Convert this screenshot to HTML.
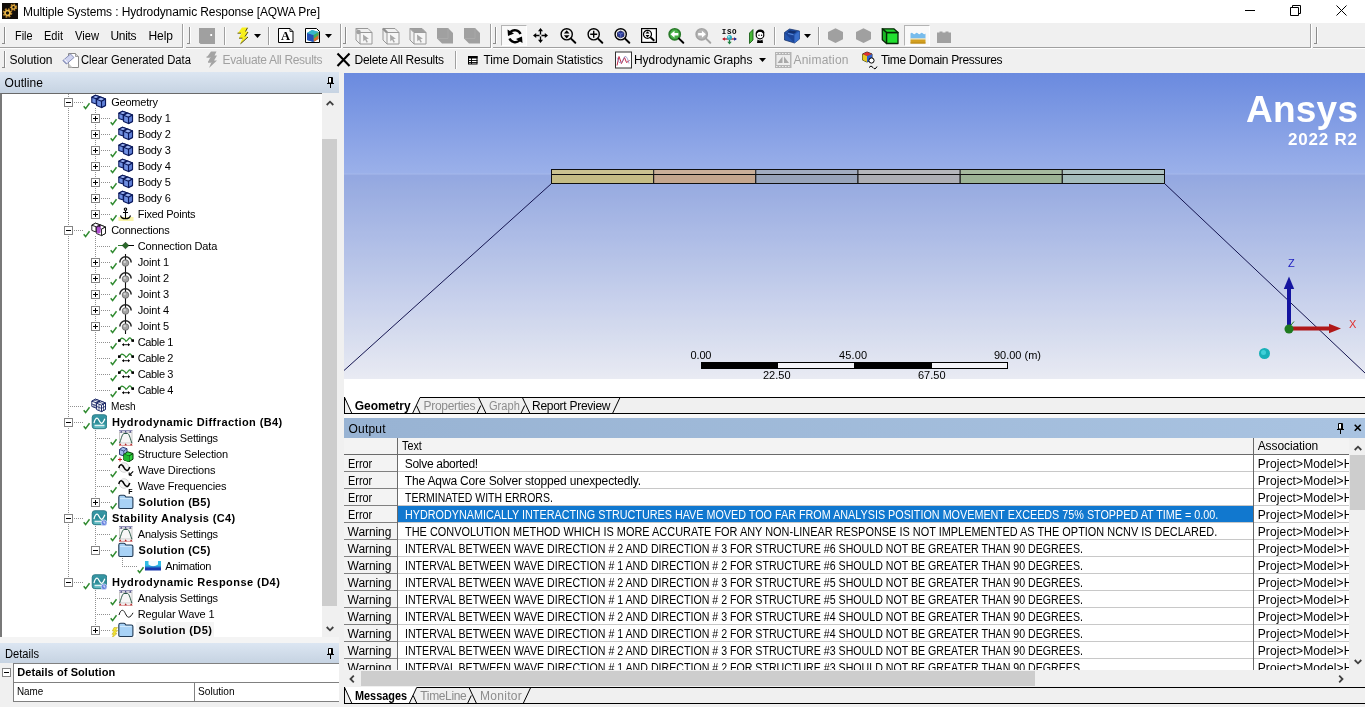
<!DOCTYPE html><html><head><meta charset="utf-8"><title>Multiple Systems : Hydrodynamic Response [AQWA Pre]</title><style>
html,body{margin:0;padding:0;}
body{width:1365px;height:707px;position:relative;overflow:hidden;background:#f0f0f0;will-change:transform;font-family:"Liberation Sans",sans-serif;}
div,span.t,svg{position:absolute;}
span.t{white-space:pre;line-height:1;}
</style></head><body>
<div style="left:0px;top:0px;width:1365px;height:23px;background:#fff;"></div>
<svg style="left:2px;top:3px" width="16" height="16" viewBox="0 0 16 16"><rect width="16" height="16" fill="#120e0a"/><g fill="none"><circle cx="5.500" cy="10" r="3.300" stroke="#b8822a" stroke-width="3" stroke-dasharray="1.500 1.100"/><circle cx="5.500" cy="10" r="2.500" stroke="#e8b84a" stroke-width="1.700"/><circle cx="11.500" cy="4.300" r="2.500" stroke="#b8822a" stroke-width="2.400" stroke-dasharray="1.300 1"/><circle cx="11.500" cy="4.300" r="1.900" stroke="#e0ac40" stroke-width="1.300"/></g></svg>
<span class="t" style="left:23px;top:5.84px;font-size:12px;letter-spacing:-0.107px;">Multiple Systems : Hydrodynamic Response [AQWA Pre]</span>
<svg style="left:1240px;top:0" width="125" height="22" viewBox="1240 0 125 22" fill="none" stroke="#000" stroke-width="1"><path d="M1245 10.500h10"/><path d="M1290.500 7.500h8v8h-8z M1292.500 7.500v-2h8v8h-2"/><path d="M1336.500 5.500l10 10M1346.500 5.500l-10 10"/></svg>
<div style="left:0px;top:47px;width:183px;height:1px;background:#a0a0a0;"></div>
<div style="left:0px;top:48px;width:184px;height:1px;background:#fff;"></div>
<div style="left:182px;top:24px;width:1px;height:24px;background:#a0a0a0;"></div>
<div style="left:183px;top:24px;width:1px;height:24px;background:#fff;"></div>
<div style="left:186px;top:47px;width:155px;height:1px;background:#a0a0a0;"></div>
<div style="left:186px;top:48px;width:156px;height:1px;background:#fff;"></div>
<div style="left:340px;top:24px;width:1px;height:24px;background:#a0a0a0;"></div>
<div style="left:341px;top:24px;width:1px;height:24px;background:#fff;"></div>
<div style="left:343px;top:47px;width:148px;height:1px;background:#a0a0a0;"></div>
<div style="left:343px;top:48px;width:149px;height:1px;background:#fff;"></div>
<div style="left:490px;top:24px;width:1px;height:24px;background:#a0a0a0;"></div>
<div style="left:491px;top:24px;width:1px;height:24px;background:#fff;"></div>
<div style="left:493px;top:47px;width:818px;height:1px;background:#a0a0a0;"></div>
<div style="left:493px;top:48px;width:819px;height:1px;background:#fff;"></div>
<div style="left:1310px;top:24px;width:1px;height:24px;background:#a0a0a0;"></div>
<div style="left:1311px;top:24px;width:1px;height:24px;background:#fff;"></div>
<div style="left:1313px;top:47px;width:57px;height:1px;background:#a0a0a0;"></div>
<div style="left:1313px;top:48px;width:58px;height:1px;background:#fff;"></div>
<div style="left:1369px;top:24px;width:1px;height:24px;background:#a0a0a0;"></div>
<div style="left:1370px;top:24px;width:1px;height:24px;background:#fff;"></div>
<div style="left:4px;top:27px;width:1px;height:17px;background:#8c8c8c;"></div>
<div style="left:2px;top:43px;width:3px;height:1px;background:#8c8c8c;"></div>
<div style="left:5px;top:27px;width:1px;height:16px;background:#fff;"></div>
<div style="left:189px;top:27px;width:1px;height:17px;background:#8c8c8c;"></div>
<div style="left:187px;top:43px;width:3px;height:1px;background:#8c8c8c;"></div>
<div style="left:190px;top:27px;width:1px;height:16px;background:#fff;"></div>
<div style="left:345px;top:27px;width:1px;height:17px;background:#8c8c8c;"></div>
<div style="left:343px;top:43px;width:3px;height:1px;background:#8c8c8c;"></div>
<div style="left:346px;top:27px;width:1px;height:16px;background:#fff;"></div>
<div style="left:495px;top:27px;width:1px;height:17px;background:#8c8c8c;"></div>
<div style="left:493px;top:43px;width:3px;height:1px;background:#8c8c8c;"></div>
<div style="left:496px;top:27px;width:1px;height:16px;background:#fff;"></div>
<div style="left:1316px;top:27px;width:1px;height:17px;background:#8c8c8c;"></div>
<div style="left:1314px;top:43px;width:3px;height:1px;background:#8c8c8c;"></div>
<div style="left:1317px;top:27px;width:1px;height:16px;background:#fff;"></div>
<span class="t" style="left:14.5px;top:29.84px;font-size:12px;transform:scaleX(0.9047);transform-origin:0 0;">File</span>
<span class="t" style="left:43.5px;top:29.84px;font-size:12px;transform:scaleX(0.9184);transform-origin:0 0;">Edit</span>
<span class="t" style="left:74.5px;top:29.84px;font-size:12px;transform:scaleX(0.9303);transform-origin:0 0;">View</span>
<span class="t" style="left:110.5px;top:29.84px;font-size:12px;letter-spacing:-0.336px;">Units</span>
<span class="t" style="left:148.5px;top:29.84px;font-size:12px;letter-spacing:-0.062px;">Help</span>
<div style="left:4px;top:51px;width:1px;height:17px;background:#8c8c8c;"></div>
<div style="left:2px;top:67px;width:3px;height:1px;background:#8c8c8c;"></div>
<div style="left:5px;top:51px;width:1px;height:16px;background:#fff;"></div>
<div style="left:501px;top:25px;width:26px;height:21px;background:#f9f9f9;border-top:1px solid #b4b4b4;border-left:1px solid #b4b4b4;border-right:1px solid #fff;border-bottom:1px solid #fff;box-sizing:border-box;"></div>
<div style="left:904px;top:25px;width:26px;height:21px;background:#f9f9f9;border-top:1px solid #b4b4b4;border-left:1px solid #b4b4b4;border-right:1px solid #fff;border-bottom:1px solid #fff;box-sizing:border-box;"></div>
<div style="left:224px;top:27px;width:1px;height:18px;background:#a0a0a0;"></div>
<div style="left:225px;top:27px;width:1px;height:18px;background:#fff;"></div>
<div style="left:268px;top:27px;width:1px;height:18px;background:#a0a0a0;"></div>
<div style="left:269px;top:27px;width:1px;height:18px;background:#fff;"></div>
<div style="left:774px;top:27px;width:1px;height:18px;background:#a0a0a0;"></div>
<div style="left:775px;top:27px;width:1px;height:18px;background:#fff;"></div>
<div style="left:818px;top:27px;width:1px;height:18px;background:#a0a0a0;"></div>
<div style="left:819px;top:27px;width:1px;height:18px;background:#fff;"></div>
<div style="left:455px;top:51px;width:1px;height:18px;background:#a0a0a0;"></div>
<div style="left:456px;top:51px;width:1px;height:18px;background:#fff;"></div>
<span class="t" style="left:9.5px;top:53.84px;font-size:12px;letter-spacing:-0.054px;">Solution</span>
<span class="t" style="left:80.5px;top:53.84px;font-size:12px;transform:scaleX(0.9369);transform-origin:0 0;">Clear Generated Data</span>
<span class="t" style="left:222.5px;top:53.84px;font-size:12px;letter-spacing:-0.319px;color:#a0a0a0;">Evaluate All Results</span>
<span class="t" style="left:354.5px;top:53.84px;font-size:12px;letter-spacing:-0.267px;">Delete All Results</span>
<span class="t" style="left:483.5px;top:53.84px;font-size:12px;letter-spacing:-0.131px;">Time Domain Statistics</span>
<span class="t" style="left:634px;top:53.84px;font-size:12px;letter-spacing:-0.049px;">Hydrodynamic Graphs</span>
<span class="t" style="left:793.5px;top:53.84px;font-size:12px;letter-spacing:0.203px;color:#a0a0a0;">Animation</span>
<span class="t" style="left:881px;top:53.84px;font-size:12px;letter-spacing:-0.338px;">Time Domain Pressures</span>
<svg style="left:0;top:22px" width="1365" height="50" viewBox="0 22 1365 50"><g transform="translate(199 28)"><path d="M0 0h16v16H1.500L0 14.500z" fill="#a0a0a0"/><rect x="11.300" y="6" width="1.800" height="2" fill="#fff"/></g><g transform="translate(236 27)"><path d="M11.500 0.500L6 0.500 2 6 5.500 6 3 11 6.500 11 4 17 12 9.500 9 9.500 12 4.500 9.500 4.500Z" fill="#f7ef1a"/><path d="M11.500 0.800L9.500 4.500M12 5L9 9.500M12 10L4.500 16.800" stroke="#4a4408" stroke-width="1" fill="none"/><path d="M1.500 6.200h3.500M3 11.200h3.500" stroke="#6a6010" stroke-width="1"/></g><path d="M254 34h7l-3.500 4z" fill="#000"/><g transform="translate(278 28)"><path d="M0.500 0.500h11.500l3 3v11H0.500z" fill="#fff" stroke="#000"/><path d="M12 0.500v3h3" fill="none" stroke="#000" stroke-width="0.800"/><text x="7.600" y="12.300" font-family="Liberation Serif,serif" font-size="12.500" font-weight="bold" text-anchor="middle" fill="#000">A</text></g><g transform="translate(305 28)"><path d="M0.500 0.500h11l3 3v11H0.500z" fill="#fff" stroke="#000"/><path d="M2 5l5-3 6.500 2v7l-5 3L2 12z" fill="#2e8fd0"/><path d="M8.500 7l5-3v7l-5 3z" fill="#d8702a"/><path d="M8.500 7l5-3v3l-5 4z" fill="#3cb060"/><path d="M2 5l6.500 2v7L2 12z" fill="#2450b8"/><path d="M2 5l5-3 6.500 2-5 3z" fill="#38b6c8"/></g><path d="M325 34h7l-3.500 4z" fill="#000"/><g transform="translate(355.5 27.5)"><g fill="none" stroke="#989898" stroke-width="1"><path d="M4.500 5h12v11.500h-12z" fill="#f6f6f6"/><path d="M0.500 1h12l4 4M0.500 1l4 4M0.500 1v11.500l4 4"/></g><path d="M7.500 7l0.300 7 1.800-1.800 1.500 3 1.300-0.700-1.500-2.900 2.500-0.300z" fill="#a8a8a8"/><circle cx="3" cy="4.500" r="2.300" fill="#a0a0a0"/></g><g transform="translate(382.5 27.5)"><g fill="none" stroke="#989898" stroke-width="1"><path d="M4.500 5h12v11.500h-12z" fill="#f6f6f6"/><path d="M0.500 1h12l4 4M0.500 1l4 4M0.500 1v11.500l4 4"/></g><path d="M7.500 7l0.300 7 1.800-1.800 1.500 3 1.300-0.700-1.500-2.900 2.500-0.300z" fill="#a8a8a8"/><path d="M0.500 1l4 4" stroke="#909090" stroke-width="2.400"/></g><g transform="translate(409.5 27.5)"><g fill="none" stroke="#989898" stroke-width="1"><path d="M4.500 5h12v11.500h-12z" fill="#f6f6f6"/><path d="M0.500 1h12l4 4M0.500 1l4 4M0.500 1v11.500l4 4"/></g><path d="M7.500 7l0.300 7 1.800-1.800 1.500 3 1.300-0.700-1.500-2.900 2.500-0.300z" fill="#a8a8a8"/><path d="M0.500 1h12l4 4h-12z" fill="#a0a0a0"/></g><g transform="translate(437 28)"><path d="M0 0h11l5 5v10.500H5l-5-5z" fill="#a0a0a0"/><path d="M11 0v10.500H0" stroke="#b0b0b0" stroke-width="0.600" fill="none"/></g><g transform="translate(464 28)"><path d="M0 0h11l5 5v10.500H5l-5-5z" fill="#a0a0a0"/><path d="M11 0v10.500H0" stroke="#b0b0b0" stroke-width="0.600" fill="none"/></g><g transform="translate(506 27)"><g fill="none" stroke="#000" stroke-width="2.400"><path d="M14.500 7A6 5.500 0 0 0 4.500 5"/><path d="M3.500 11.500A6 5.500 0 0 0 13.500 13.500"/></g><path d="M1.500 2.500l0.500 6.500 6-2.500z M16.500 16l-0.500-6.500-6 2.500z" fill="#000"/></g><g transform="translate(533 28)"><path d="M7.500 2v11M2 7.500h11" stroke="#000" stroke-width="1.300" fill="none"/><path d="M7.500 0l2.500 3.200h-5zM7.500 15l2.500-3.200h-5zM0 7.500l3.200-2.500v5zM15 7.500l-3.200-2.500v5z" fill="#000"/><rect x="6.500" y="6.500" width="2" height="2" fill="#f0f0f0"/></g><g transform="translate(560 28)"><circle cx="6.700" cy="6.300" r="5.600" fill="none" stroke="#000" stroke-width="1.4"/><path d="M11 10.600l4.300 4.200" stroke="#000" stroke-width="2" stroke-linecap="round"/><path d="M6.700 2.200l2.800 3.200H3.900zM6.700 10.400L3.900 7.200h5.600z" fill="#000"/></g><g transform="translate(587 28)"><circle cx="6.700" cy="6.300" r="5.600" fill="none" stroke="#000" stroke-width="1.4"/><path d="M11 10.600l4.300 4.200" stroke="#000" stroke-width="2" stroke-linecap="round"/><path d="M6.700 2.800v7M3.200 6.300h7" stroke="#000" stroke-width="1.400"/></g><g transform="translate(614 28)"><circle cx="6.700" cy="6.300" r="5.600" fill="none" stroke="#000" stroke-width="1.4"/><path d="M11 10.600l4.300 4.200" stroke="#000" stroke-width="2" stroke-linecap="round"/><path d="M3.500 4.500l3.200-1.500 3.200 1.500v3.800l-3.200 1.500-3.200-1.500z" fill="#2a3a9a" stroke="#101040" stroke-width="0.700"/><path d="M3.500 4.500l3.200 1.500 3.200-1.500M6.700 6v3.800" stroke="#8090d8" stroke-width="0.600" fill="none"/></g><g transform="translate(641 28)"><rect x="0.600" y="0.600" width="14.800" height="13.800" fill="#fff" stroke="#000" stroke-width="1.200"/><circle cx="6.500" cy="6.300" r="4" fill="none" stroke="#000" stroke-width="1.200"/><path d="M9.500 9.300l3.800 3.500" stroke="#000" stroke-width="1.900"/><path d="M6.500 3.200l2 2.300h-4zM6.500 9.400l-2-2.300h4z" fill="#000"/></g><g transform="translate(668 28)"><circle cx="6.700" cy="6.300" r="5.600" fill="#48b048" stroke="#2a7a2a" stroke-width="1.6"/><path d="M11 10.600l4.300 4.200" stroke="#000" stroke-width="2" stroke-linecap="round"/><path d="M2.500 6.300l4-3.500v2.200h3.800v2.600H6.500v2.200z" fill="#fff"/></g><g transform="translate(695 28)"><circle cx="6.700" cy="6.300" r="5.600" fill="#b4b4b4" stroke="#a4a4a4" stroke-width="1.6"/><path d="M11 10.600l4.300 4.200" stroke="#a4a4a4" stroke-width="2" stroke-linecap="round"/><path d="M10.900 6.300l-4-3.500v2.200H3.100v2.600h3.800v2.200z" fill="#fff"/></g><g transform="translate(721 27)"><text x="8.500" y="6.800" font-size="7.500" font-weight="bold" text-anchor="middle" font-family="Liberation Mono,monospace" letter-spacing="0.600" fill="#000">ISO</text><path d="M8.500 9v7" stroke="#208040" stroke-width="1.300"/><path d="M2 12h13" stroke="#a02030" stroke-width="1.300"/><path d="M1 12l3-1.800v3.600z" fill="#c02030"/><path d="M16 12l-3-1.800v3.600z" fill="#2030a0"/><circle cx="8.500" cy="10.500" r="2.500" fill="#30b0c0"/><circle cx="7.800" cy="9.800" r="1" fill="#a0e8f0"/><path d="M8.500 17.500l-2.200-2.800h4.400z" fill="#208040"/></g><g transform="translate(748 27)"><path d="M1.500 6l3.500-3.500v10.500l-3.500 3.500z" fill="#48b838" stroke="#0a500a" stroke-width="0.800"/><circle cx="12" cy="8" r="3.800" fill="#fff" stroke="#000" stroke-width="1.200"/><path d="M7.500 7q0.500-5 5.500-4.500 3.500 0.500 3.500 4l-1.500-0.500q-3-3-6 0z" fill="#000"/><circle cx="11" cy="8.300" r="0.700"/><circle cx="13.600" cy="8.300" r="0.700"/><path d="M9.500 12.500q2.500 2 5 0l0.500 3.500h-6z" fill="#000"/></g><g transform="translate(784 28)"><path d="M0.500 4.500l5-3.500 10 2v8l-5 4-10-3z" fill="#2456b0" stroke="#102a60" stroke-width="0.700"/><path d="M0.500 4.500l10 2.500v8z" fill="#1c4496"/><path d="M10.500 7l5-4v8l-5 4z" fill="#3a70cc"/><path d="M3 4.200l3-2 7 1.400-3 2.200z" fill="#123070"/><path d="M4 5.500l5.500 1.300" stroke="#6a9ae8" stroke-width="0.800"/></g><path d="M804 34h7l-3.500 4z" fill="#000"/><g transform="translate(828 28.3)"><path d="M7.500 0l7.500 3.600v7.400l-7.500 3.600L0 11V3.600z" fill="#a0a0a0"/></g><g transform="translate(856 28.3)"><path d="M7.500 0l7.500 3.600v7.400l-7.500 3.600L0 11V3.600z" fill="#a0a0a0"/></g><g transform="translate(881.5 28)"><g stroke="#062806" stroke-width="1.300" stroke-linejoin="round"><path d="M5 4.500h11.500v11H5z" fill="#22e030"/><path d="M0.800 0.800h11.500l4.200 3.700H5z" fill="#20d82c"/><path d="M0.800 0.800L5 4.500v11l-4.200-3.700z" fill="#18b824"/></g></g><g transform="translate(910.5 32.5)"><path d="M0 1q1.250-1.500 2.500 0t2.500 0 2.500 0 2.500 0 2.500 0 2.500 0v5H0z" fill="#78bcec"/><rect x="0" y="5.800" width="15" height="1.200" fill="#e4ddb8"/><rect x="0" y="7" width="15" height="4" fill="#d4a020"/><rect x="0" y="10" width="15" height="1" fill="#b88818"/></g><g transform="translate(937 31.5)"><path d="M0 1h2.500v-1h3v1h3v-1h3v1H14v10.500H0z" fill="#a0a0a0"/></g><g transform="translate(62 51)"><path d="M6.500 2.500h7l3 3v11h-10z" fill="#fff" stroke="#8a8a8a"/><path d="M13.500 2.500v3h3" fill="#d8d8d8" stroke="#8a8a8a" stroke-width="0.800"/><path d="M6.500 12l4 4.500h-4z" fill="#c8c8c8"/><path d="M1 9.500l7.500-6.500 3.500 3.500-7.500 6.500z" fill="#d0d4f0" stroke="#7078a8" stroke-width="0.800"/><path d="M1 9.500l3.500 3.500" stroke="#7078a8" stroke-width="0.800"/><path d="M2.500 8.500l3 3" stroke="#fff" stroke-width="0.800"/></g><g transform="translate(205 51)"><path d="M11.500 0.500L6 0.500 2 6 5.500 6 3 11 6.500 11 4 17 12 9.500 9 9.500 12 4.500 9.500 4.500Z" fill="#a4a4a4"/><path d="M1.500 6.200h3.500M3 11.200h3.500" stroke="#a4a4a4" stroke-width="1.200"/></g><g transform="translate(336 52)"><path d="M1.500 1.500l12 12.500M13.500 1.500l-12 12.500" stroke="#000" stroke-width="2.100" fill="none"/></g><g transform="translate(468 56)"><rect x="0.500" y="0.500" width="8.500" height="7.500" fill="#fff" stroke="#000"/><rect x="0" y="0" width="9.500" height="2.500" fill="#000"/><path d="M0 4.500h9.500M0 6.500h9.500M3.500 2v6" stroke="#000" stroke-width="0.900"/></g><g transform="translate(615 51.5)"><rect x="0.500" y="0.500" width="16" height="16" fill="#fff" stroke="#303030"/><path d="M2 14l2-9 2.500 7 3-6 2 5 3-2" fill="none" stroke="#c02848" stroke-width="1"/><path d="M2 6q3 10 6 2t6 4" fill="none" stroke="#9090c8" stroke-width="0.800"/></g><path d="M759 58h7l-3.500 4z" fill="#000"/><g transform="translate(775 52)"><rect width="16.500" height="16" fill="#b4b4b4"/><rect x="1.500" y="3" width="13.500" height="10" fill="#ececec"/><path d="M2.500 11l5-6.500v6.500zM14 11l-5-6.500v6.500z" fill="#a8a8a8"/><path d="M1 1.500h15M1 14.500h15" stroke="#ececec" stroke-width="1.200" stroke-dasharray="1.500 1.500"/></g><g transform="translate(861 50)"><path d="M1.500 4l4.500-2 5 2v6l-5 2-4.500-2z" fill="#30a030" stroke="#000" stroke-width="0.800"/><path d="M1.500 4l4.500 2v6l-4.500-2z" fill="#e8c820"/><path d="M6 6l5-2v6l-5 2z" fill="#3060d0"/><path d="M1.500 4l4.500-2 5 2-5 2z" fill="#e03030"/><circle cx="10.500" cy="10.500" r="2.600" fill="#fff" stroke="#000" stroke-width="1"/><path d="M8 17.500q2-3 4 0t4-1" fill="none" stroke="#000" stroke-width="1"/></g></svg>
<svg style="left:0;top:0" width="0" height="0"><defs><linearGradient id="hg" x1="0" y1="0" x2="0" y2="1"><stop offset="0" stop-color="#3a9aa8"/><stop offset="0.500" stop-color="#2a8a96"/><stop offset="1" stop-color="#48b0b8"/></linearGradient></defs></svg>
<div style="left:0px;top:72px;width:339px;height:21px;background:linear-gradient(#dce6f2,#c6d3e2);"></div>
<span class="t" style="left:4.5px;top:76.84px;font-size:12px;letter-spacing:0.078px;">Outline</span>
<svg style="left:327px;top:77px" width="7" height="11" viewBox="0 0 7 11"><path d="M1.500 0.500h4v5.500h-4z" fill="#fff" stroke="#000"/><path d="M4.500 1v5" stroke="#000"/><path d="M0 6.500h7M3.500 7v4" stroke="#000" fill="none"/></svg>
<div style="left:0px;top:93px;width:322px;height:544px;background:#fff;border-left:2px solid #787878;border-top:1px solid #696969;box-sizing:border-box;"></div>
<div style="left:322px;top:93px;width:17px;height:544px;background:#f0f0f0;"></div>
<div style="left:322px;top:139px;width:15px;height:467px;background:#cdcdcd;"></div>
<svg style="left:326px;top:100px" width="8" height="6" viewBox="0 0 8 6"><path d="M0.700 5l3.300-3.300L7.300 5" fill="none" stroke="#404040" stroke-width="1.800"/></svg>
<svg style="left:326px;top:626px" width="8" height="6" viewBox="0 0 8 6"><path d="M0.700 1l3.300 3.300L7.300 1" fill="none" stroke="#404040" stroke-width="1.800"/></svg>
<div style="left:68px;top:94px;width:1px;height:485px;background:repeating-linear-gradient(to bottom,#909090 0 1px,transparent 1px 2px);"></div>
<div style="left:95px;top:108px;width:1px;height:107px;background:repeating-linear-gradient(to bottom,#909090 0 1px,transparent 1px 2px);"></div>
<div style="left:95px;top:236px;width:1px;height:155px;background:repeating-linear-gradient(to bottom,#909090 0 1px,transparent 1px 2px);"></div>
<div style="left:95px;top:428px;width:1px;height:75px;background:repeating-linear-gradient(to bottom,#909090 0 1px,transparent 1px 2px);"></div>
<div style="left:95px;top:524px;width:1px;height:27px;background:repeating-linear-gradient(to bottom,#909090 0 1px,transparent 1px 2px);"></div>
<div style="left:95px;top:588px;width:1px;height:43px;background:repeating-linear-gradient(to bottom,#909090 0 1px,transparent 1px 2px);"></div>
<div style="left:122px;top:556px;width:1px;height:11px;background:repeating-linear-gradient(to bottom,#909090 0 1px,transparent 1px 2px);"></div>
<div style="left:74px;top:102px;width:9px;height:1px;background:repeating-linear-gradient(to right,#909090 0 1px,transparent 1px 2px);"></div>
<svg style="left:64px;top:98px" width="9" height="9" viewBox="0 0 9 9"><rect x="0.500" y="0.500" width="8" height="8" fill="#fff" stroke="#848484"/><path d="M2 4.500h5" stroke="#000"/></svg>
<svg style="left:83px;top:102px" width="8" height="8" viewBox="0 0 8 8"><path d="M0.700 4.300l1.900 2.300L6.500 1.300" fill="none" stroke="#2f8a2f" stroke-width="1.500"/></svg>
<svg style="left:91px;top:94px" width="16" height="16" viewBox="0 0 16 16"><g stroke="#0c1a5c" stroke-width="1.1" stroke-linejoin="round"><path d="M0.800 3.200l3.700-2 4.300 1.600v2.500l-3.600 4.800-4.400-1.700z" fill="#7090e2"/><path d="M0.800 3.200l3.700-2 4.300 1.600-3.600 2z" fill="#9ab2f2"/><path d="M5.200 4.800v5.300" fill="none"/><path d="M5.600 5.200l4-2.200 4.900 2v6.400l-4 2.200-4.900-2z" fill="#7090e2"/><path d="M5.600 5.200l4-2.200 4.900 2-4 2.200z" fill="#9ab2f2"/><path d="M10.500 7.200l4-2.200v6.400l-4 2.200z" fill="#5f7fd6"/></g></svg>
<span class="t" style="left:111.2px;top:96.69px;font-size:11px;letter-spacing:-0.214px;">Geometry</span>
<div style="left:101px;top:118px;width:9px;height:1px;background:repeating-linear-gradient(to right,#909090 0 1px,transparent 1px 2px);"></div>
<svg style="left:91px;top:114px" width="9" height="9" viewBox="0 0 9 9"><rect x="0.500" y="0.500" width="8" height="8" fill="#fff" stroke="#848484"/><path d="M2 4.500h5" stroke="#000"/><path d="M4.500 2v5" stroke="#000"/></svg>
<svg style="left:110px;top:118px" width="8" height="8" viewBox="0 0 8 8"><path d="M0.700 4.300l1.900 2.300L6.500 1.300" fill="none" stroke="#2f8a2f" stroke-width="1.500"/></svg>
<svg style="left:118px;top:110px" width="16" height="16" viewBox="0 0 16 16"><g stroke="#0c1a5c" stroke-width="1.1" stroke-linejoin="round"><path d="M0.800 3.200l3.700-2 4.300 1.600v2.500l-3.600 4.800-4.400-1.700z" fill="#7090e2"/><path d="M0.800 3.200l3.700-2 4.300 1.600-3.600 2z" fill="#9ab2f2"/><path d="M5.200 4.800v5.300" fill="none"/><path d="M5.600 5.200l4-2.200 4.900 2v6.400l-4 2.200-4.900-2z" fill="#7090e2"/><path d="M5.600 5.200l4-2.200 4.900 2-4 2.200z" fill="#9ab2f2"/><path d="M10.500 7.200l4-2.200v6.400l-4 2.200z" fill="#5f7fd6"/></g></svg>
<span class="t" style="left:137.8px;top:112.69px;font-size:11px;letter-spacing:-0.250px;">Body 1</span>
<div style="left:101px;top:134px;width:9px;height:1px;background:repeating-linear-gradient(to right,#909090 0 1px,transparent 1px 2px);"></div>
<svg style="left:91px;top:130px" width="9" height="9" viewBox="0 0 9 9"><rect x="0.500" y="0.500" width="8" height="8" fill="#fff" stroke="#848484"/><path d="M2 4.500h5" stroke="#000"/><path d="M4.500 2v5" stroke="#000"/></svg>
<svg style="left:110px;top:134px" width="8" height="8" viewBox="0 0 8 8"><path d="M0.700 4.300l1.900 2.300L6.500 1.300" fill="none" stroke="#2f8a2f" stroke-width="1.500"/></svg>
<svg style="left:118px;top:126px" width="16" height="16" viewBox="0 0 16 16"><g stroke="#0c1a5c" stroke-width="1.1" stroke-linejoin="round"><path d="M0.800 3.200l3.700-2 4.300 1.600v2.500l-3.600 4.800-4.400-1.700z" fill="#7090e2"/><path d="M0.800 3.200l3.700-2 4.300 1.600-3.600 2z" fill="#9ab2f2"/><path d="M5.200 4.800v5.300" fill="none"/><path d="M5.600 5.200l4-2.200 4.900 2v6.400l-4 2.200-4.900-2z" fill="#7090e2"/><path d="M5.600 5.200l4-2.200 4.900 2-4 2.200z" fill="#9ab2f2"/><path d="M10.500 7.200l4-2.200v6.400l-4 2.200z" fill="#5f7fd6"/></g></svg>
<span class="t" style="left:137.8px;top:128.69px;font-size:11px;letter-spacing:-0.250px;">Body 2</span>
<div style="left:101px;top:150px;width:9px;height:1px;background:repeating-linear-gradient(to right,#909090 0 1px,transparent 1px 2px);"></div>
<svg style="left:91px;top:146px" width="9" height="9" viewBox="0 0 9 9"><rect x="0.500" y="0.500" width="8" height="8" fill="#fff" stroke="#848484"/><path d="M2 4.500h5" stroke="#000"/><path d="M4.500 2v5" stroke="#000"/></svg>
<svg style="left:110px;top:150px" width="8" height="8" viewBox="0 0 8 8"><path d="M0.700 4.300l1.900 2.300L6.500 1.300" fill="none" stroke="#2f8a2f" stroke-width="1.500"/></svg>
<svg style="left:118px;top:142px" width="16" height="16" viewBox="0 0 16 16"><g stroke="#0c1a5c" stroke-width="1.1" stroke-linejoin="round"><path d="M0.800 3.200l3.700-2 4.300 1.600v2.500l-3.600 4.800-4.400-1.700z" fill="#7090e2"/><path d="M0.800 3.200l3.700-2 4.300 1.600-3.600 2z" fill="#9ab2f2"/><path d="M5.200 4.800v5.300" fill="none"/><path d="M5.600 5.200l4-2.200 4.900 2v6.400l-4 2.200-4.900-2z" fill="#7090e2"/><path d="M5.600 5.200l4-2.200 4.900 2-4 2.200z" fill="#9ab2f2"/><path d="M10.500 7.200l4-2.200v6.400l-4 2.200z" fill="#5f7fd6"/></g></svg>
<span class="t" style="left:137.8px;top:144.69px;font-size:11px;letter-spacing:-0.250px;">Body 3</span>
<div style="left:101px;top:166px;width:9px;height:1px;background:repeating-linear-gradient(to right,#909090 0 1px,transparent 1px 2px);"></div>
<svg style="left:91px;top:162px" width="9" height="9" viewBox="0 0 9 9"><rect x="0.500" y="0.500" width="8" height="8" fill="#fff" stroke="#848484"/><path d="M2 4.500h5" stroke="#000"/><path d="M4.500 2v5" stroke="#000"/></svg>
<svg style="left:110px;top:166px" width="8" height="8" viewBox="0 0 8 8"><path d="M0.700 4.300l1.900 2.300L6.500 1.300" fill="none" stroke="#2f8a2f" stroke-width="1.500"/></svg>
<svg style="left:118px;top:158px" width="16" height="16" viewBox="0 0 16 16"><g stroke="#0c1a5c" stroke-width="1.1" stroke-linejoin="round"><path d="M0.800 3.200l3.700-2 4.300 1.600v2.500l-3.600 4.800-4.400-1.700z" fill="#7090e2"/><path d="M0.800 3.200l3.700-2 4.300 1.600-3.600 2z" fill="#9ab2f2"/><path d="M5.200 4.800v5.300" fill="none"/><path d="M5.600 5.200l4-2.200 4.900 2v6.400l-4 2.200-4.900-2z" fill="#7090e2"/><path d="M5.600 5.200l4-2.200 4.900 2-4 2.200z" fill="#9ab2f2"/><path d="M10.500 7.200l4-2.200v6.400l-4 2.200z" fill="#5f7fd6"/></g></svg>
<span class="t" style="left:137.8px;top:160.69px;font-size:11px;letter-spacing:-0.250px;">Body 4</span>
<div style="left:101px;top:182px;width:9px;height:1px;background:repeating-linear-gradient(to right,#909090 0 1px,transparent 1px 2px);"></div>
<svg style="left:91px;top:178px" width="9" height="9" viewBox="0 0 9 9"><rect x="0.500" y="0.500" width="8" height="8" fill="#fff" stroke="#848484"/><path d="M2 4.500h5" stroke="#000"/><path d="M4.500 2v5" stroke="#000"/></svg>
<svg style="left:110px;top:182px" width="8" height="8" viewBox="0 0 8 8"><path d="M0.700 4.300l1.900 2.300L6.500 1.300" fill="none" stroke="#2f8a2f" stroke-width="1.500"/></svg>
<svg style="left:118px;top:174px" width="16" height="16" viewBox="0 0 16 16"><g stroke="#0c1a5c" stroke-width="1.1" stroke-linejoin="round"><path d="M0.800 3.200l3.700-2 4.300 1.600v2.500l-3.600 4.800-4.400-1.700z" fill="#7090e2"/><path d="M0.800 3.200l3.700-2 4.300 1.600-3.600 2z" fill="#9ab2f2"/><path d="M5.200 4.800v5.300" fill="none"/><path d="M5.600 5.200l4-2.200 4.900 2v6.400l-4 2.200-4.900-2z" fill="#7090e2"/><path d="M5.600 5.200l4-2.200 4.900 2-4 2.200z" fill="#9ab2f2"/><path d="M10.500 7.200l4-2.200v6.400l-4 2.200z" fill="#5f7fd6"/></g></svg>
<span class="t" style="left:137.8px;top:176.69px;font-size:11px;letter-spacing:-0.250px;">Body 5</span>
<div style="left:101px;top:198px;width:9px;height:1px;background:repeating-linear-gradient(to right,#909090 0 1px,transparent 1px 2px);"></div>
<svg style="left:91px;top:194px" width="9" height="9" viewBox="0 0 9 9"><rect x="0.500" y="0.500" width="8" height="8" fill="#fff" stroke="#848484"/><path d="M2 4.500h5" stroke="#000"/><path d="M4.500 2v5" stroke="#000"/></svg>
<svg style="left:110px;top:198px" width="8" height="8" viewBox="0 0 8 8"><path d="M0.700 4.300l1.900 2.300L6.500 1.300" fill="none" stroke="#2f8a2f" stroke-width="1.500"/></svg>
<svg style="left:118px;top:190px" width="16" height="16" viewBox="0 0 16 16"><g stroke="#0c1a5c" stroke-width="1.1" stroke-linejoin="round"><path d="M0.800 3.200l3.700-2 4.300 1.600v2.500l-3.600 4.800-4.400-1.700z" fill="#7090e2"/><path d="M0.800 3.200l3.700-2 4.300 1.600-3.600 2z" fill="#9ab2f2"/><path d="M5.200 4.800v5.300" fill="none"/><path d="M5.600 5.200l4-2.200 4.900 2v6.400l-4 2.200-4.900-2z" fill="#7090e2"/><path d="M5.600 5.200l4-2.200 4.900 2-4 2.200z" fill="#9ab2f2"/><path d="M10.500 7.200l4-2.200v6.400l-4 2.200z" fill="#5f7fd6"/></g></svg>
<span class="t" style="left:137.8px;top:192.69px;font-size:11px;letter-spacing:-0.250px;">Body 6</span>
<div style="left:101px;top:214px;width:9px;height:1px;background:repeating-linear-gradient(to right,#909090 0 1px,transparent 1px 2px);"></div>
<svg style="left:91px;top:210px" width="9" height="9" viewBox="0 0 9 9"><rect x="0.500" y="0.500" width="8" height="8" fill="#fff" stroke="#848484"/><path d="M2 4.500h5" stroke="#000"/><path d="M4.500 2v5" stroke="#000"/></svg>
<svg style="left:110px;top:214px" width="8" height="8" viewBox="0 0 8 8"><path d="M0.700 4.300l1.900 2.300L6.500 1.300" fill="none" stroke="#2f8a2f" stroke-width="1.500"/></svg>
<svg style="left:118px;top:206px" width="16" height="16" viewBox="0 0 16 16"><rect x="0.500" y="11" width="15" height="4" fill="#f8f4a8"/><g fill="none" stroke="#000" stroke-width="1.100"><circle cx="7.500" cy="3.200" r="1.200"/><path d="M7.500 4.500v8M5 6.500h5M2.500 9.500q0.800 3.300 5 3.200 4.200 0.100 5-3.200"/></g></svg>
<span class="t" style="left:137.8px;top:208.69px;font-size:11px;letter-spacing:-0.248px;">Fixed Points</span>
<div style="left:74px;top:230px;width:9px;height:1px;background:repeating-linear-gradient(to right,#909090 0 1px,transparent 1px 2px);"></div>
<svg style="left:64px;top:226px" width="9" height="9" viewBox="0 0 9 9"><rect x="0.500" y="0.500" width="8" height="8" fill="#fff" stroke="#848484"/><path d="M2 4.500h5" stroke="#000"/></svg>
<svg style="left:83px;top:230px" width="8" height="8" viewBox="0 0 8 8"><path d="M0.700 4.300l1.900 2.300L6.500 1.300" fill="none" stroke="#2f8a2f" stroke-width="1.500"/></svg>
<svg style="left:91px;top:222px" width="16" height="16" viewBox="0 0 16 16"><g stroke="#101010" stroke-width="0.9" stroke-linejoin="round"><path d="M0.800 3.200l3.700-2 4.300 1.600v2.500l-3.600 4.800-4.400-1.700z" fill="#fff"/><path d="M0.800 3.200l3.700-2 4.300 1.600-3.600 2z" fill="#fff"/><path d="M5.200 4.800v5.300" fill="none"/><path d="M5.600 5.200l4-2.200 4.900 2v6.400l-4 2.200-4.900-2z" fill="#fff"/><path d="M5.600 5.200l4-2.200 4.900 2-4 2.200z" fill="#fff"/><path d="M10.500 7.200l4-2.200v6.400l-4 2.200z" fill="#fff"/><path d="M5.200 4.200l3.400-1 1.200 1.300-0.200 6-2 1.300-2.400-1.500z" fill="#b050d0" stroke="none"/><path d="M5.200 4.800v5.300M8.800 2.800v2.400M5.600 5.200l4-2.200" fill="none"/></g></svg>
<span class="t" style="left:111.2px;top:224.69px;font-size:11px;letter-spacing:-0.266px;">Connections</span>
<div style="left:97px;top:246px;width:13px;height:1px;background:repeating-linear-gradient(to right,#909090 0 1px,transparent 1px 2px);"></div>
<svg style="left:110px;top:246px" width="8" height="8" viewBox="0 0 8 8"><path d="M0.700 4.300l1.900 2.300L6.500 1.300" fill="none" stroke="#2f8a2f" stroke-width="1.500"/></svg>
<svg style="left:118px;top:238px" width="16" height="16" viewBox="0 0 16 16"><path d="M0 7.500h5" stroke="#2f7a2f" stroke-width="1"/><path d="M10 7.500h6" stroke="#000" stroke-width="1"/><path d="M7.500 4.200l3.300 3.300-3.300 3.300-3.300-3.300z" fill="#2a6a2a" stroke="#0c300c" stroke-width="0.600"/></svg>
<span class="t" style="left:137.8px;top:240.69px;font-size:11px;letter-spacing:-0.175px;">Connection Data</span>
<div style="left:101px;top:262px;width:9px;height:1px;background:repeating-linear-gradient(to right,#909090 0 1px,transparent 1px 2px);"></div>
<svg style="left:91px;top:258px" width="9" height="9" viewBox="0 0 9 9"><rect x="0.500" y="0.500" width="8" height="8" fill="#fff" stroke="#848484"/><path d="M2 4.500h5" stroke="#000"/><path d="M4.500 2v5" stroke="#000"/></svg>
<svg style="left:110px;top:262px" width="8" height="8" viewBox="0 0 8 8"><path d="M0.700 4.300l1.900 2.300L6.500 1.300" fill="none" stroke="#2f8a2f" stroke-width="1.500"/></svg>
<svg style="left:118px;top:254px" width="16" height="16" viewBox="0 0 16 16"><path d="M7.500 0v16" stroke="#101010" stroke-width="1.100"/><path d="M1.800 8.500A5.700 5.700 0 0 1 13.200 8.500" fill="none" stroke="#202020" stroke-width="1.500"/><circle cx="7.500" cy="9" r="3.300" fill="#a4a4a4" stroke="#585858" stroke-width="0.700"/><circle cx="6.700" cy="8" r="1.200" fill="#d4d4d4"/></svg>
<span class="t" style="left:137.8px;top:256.69px;font-size:11px;letter-spacing:-0.187px;">Joint 1</span>
<div style="left:101px;top:278px;width:9px;height:1px;background:repeating-linear-gradient(to right,#909090 0 1px,transparent 1px 2px);"></div>
<svg style="left:91px;top:274px" width="9" height="9" viewBox="0 0 9 9"><rect x="0.500" y="0.500" width="8" height="8" fill="#fff" stroke="#848484"/><path d="M2 4.500h5" stroke="#000"/><path d="M4.500 2v5" stroke="#000"/></svg>
<svg style="left:110px;top:278px" width="8" height="8" viewBox="0 0 8 8"><path d="M0.700 4.300l1.900 2.300L6.500 1.300" fill="none" stroke="#2f8a2f" stroke-width="1.500"/></svg>
<svg style="left:118px;top:270px" width="16" height="16" viewBox="0 0 16 16"><path d="M7.500 0v16" stroke="#101010" stroke-width="1.100"/><path d="M1.800 8.500A5.700 5.700 0 0 1 13.200 8.500" fill="none" stroke="#202020" stroke-width="1.500"/><circle cx="7.500" cy="9" r="3.300" fill="#a4a4a4" stroke="#585858" stroke-width="0.700"/><circle cx="6.700" cy="8" r="1.200" fill="#d4d4d4"/></svg>
<span class="t" style="left:137.8px;top:272.69px;font-size:11px;letter-spacing:-0.187px;">Joint 2</span>
<div style="left:101px;top:294px;width:9px;height:1px;background:repeating-linear-gradient(to right,#909090 0 1px,transparent 1px 2px);"></div>
<svg style="left:91px;top:290px" width="9" height="9" viewBox="0 0 9 9"><rect x="0.500" y="0.500" width="8" height="8" fill="#fff" stroke="#848484"/><path d="M2 4.500h5" stroke="#000"/><path d="M4.500 2v5" stroke="#000"/></svg>
<svg style="left:110px;top:294px" width="8" height="8" viewBox="0 0 8 8"><path d="M0.700 4.300l1.900 2.300L6.500 1.300" fill="none" stroke="#2f8a2f" stroke-width="1.500"/></svg>
<svg style="left:118px;top:286px" width="16" height="16" viewBox="0 0 16 16"><path d="M7.500 0v16" stroke="#101010" stroke-width="1.100"/><path d="M1.800 8.500A5.700 5.700 0 0 1 13.200 8.500" fill="none" stroke="#202020" stroke-width="1.500"/><circle cx="7.500" cy="9" r="3.300" fill="#a4a4a4" stroke="#585858" stroke-width="0.700"/><circle cx="6.700" cy="8" r="1.200" fill="#d4d4d4"/></svg>
<span class="t" style="left:137.8px;top:288.69px;font-size:11px;letter-spacing:-0.187px;">Joint 3</span>
<div style="left:101px;top:310px;width:9px;height:1px;background:repeating-linear-gradient(to right,#909090 0 1px,transparent 1px 2px);"></div>
<svg style="left:91px;top:306px" width="9" height="9" viewBox="0 0 9 9"><rect x="0.500" y="0.500" width="8" height="8" fill="#fff" stroke="#848484"/><path d="M2 4.500h5" stroke="#000"/><path d="M4.500 2v5" stroke="#000"/></svg>
<svg style="left:110px;top:310px" width="8" height="8" viewBox="0 0 8 8"><path d="M0.700 4.300l1.900 2.300L6.500 1.300" fill="none" stroke="#2f8a2f" stroke-width="1.500"/></svg>
<svg style="left:118px;top:302px" width="16" height="16" viewBox="0 0 16 16"><path d="M7.500 0v16" stroke="#101010" stroke-width="1.100"/><path d="M1.800 8.500A5.700 5.700 0 0 1 13.200 8.500" fill="none" stroke="#202020" stroke-width="1.500"/><circle cx="7.500" cy="9" r="3.300" fill="#a4a4a4" stroke="#585858" stroke-width="0.700"/><circle cx="6.700" cy="8" r="1.200" fill="#d4d4d4"/></svg>
<span class="t" style="left:137.8px;top:304.69px;font-size:11px;letter-spacing:-0.187px;">Joint 4</span>
<div style="left:101px;top:326px;width:9px;height:1px;background:repeating-linear-gradient(to right,#909090 0 1px,transparent 1px 2px);"></div>
<svg style="left:91px;top:322px" width="9" height="9" viewBox="0 0 9 9"><rect x="0.500" y="0.500" width="8" height="8" fill="#fff" stroke="#848484"/><path d="M2 4.500h5" stroke="#000"/><path d="M4.500 2v5" stroke="#000"/></svg>
<svg style="left:110px;top:326px" width="8" height="8" viewBox="0 0 8 8"><path d="M0.700 4.300l1.900 2.300L6.500 1.300" fill="none" stroke="#2f8a2f" stroke-width="1.500"/></svg>
<svg style="left:118px;top:318px" width="16" height="16" viewBox="0 0 16 16"><path d="M7.500 0v16" stroke="#101010" stroke-width="1.100"/><path d="M1.800 8.500A5.700 5.700 0 0 1 13.200 8.500" fill="none" stroke="#202020" stroke-width="1.500"/><circle cx="7.500" cy="9" r="3.300" fill="#a4a4a4" stroke="#585858" stroke-width="0.700"/><circle cx="6.700" cy="8" r="1.200" fill="#d4d4d4"/></svg>
<span class="t" style="left:137.8px;top:320.69px;font-size:11px;letter-spacing:-0.187px;">Joint 5</span>
<div style="left:97px;top:342px;width:13px;height:1px;background:repeating-linear-gradient(to right,#909090 0 1px,transparent 1px 2px);"></div>
<svg style="left:110px;top:342px" width="8" height="8" viewBox="0 0 8 8"><path d="M0.700 4.300l1.900 2.300L6.500 1.300" fill="none" stroke="#2f8a2f" stroke-width="1.500"/></svg>
<svg style="left:118px;top:334px" width="16" height="16" viewBox="0 0 16 16"><path d="M2 6.500Q3 3 5.500 4.800T8 7.300Q8.500 7.300 10.500 4.800T14 6.500" fill="none" stroke="#2a8a2a" stroke-width="1.300"/><rect x="0" y="5.300" width="2.600" height="2.600" fill="#000"/><rect x="13.400" y="5.300" width="2.600" height="2.600" fill="#000"/><path d="M4.500 10.700h7" stroke="#000" stroke-width="0.900"/><path d="M4 10.700l2-1.600v3.200zM12 10.700l-2-1.600v3.200z" fill="#000"/></svg>
<span class="t" style="left:137.8px;top:336.69px;font-size:11px;letter-spacing:-0.370px;">Cable 1</span>
<div style="left:97px;top:358px;width:13px;height:1px;background:repeating-linear-gradient(to right,#909090 0 1px,transparent 1px 2px);"></div>
<svg style="left:110px;top:358px" width="8" height="8" viewBox="0 0 8 8"><path d="M0.700 4.300l1.900 2.300L6.500 1.300" fill="none" stroke="#2f8a2f" stroke-width="1.500"/></svg>
<svg style="left:118px;top:350px" width="16" height="16" viewBox="0 0 16 16"><path d="M2 6.500Q3 3 5.500 4.800T8 7.300Q8.500 7.300 10.500 4.800T14 6.500" fill="none" stroke="#2a8a2a" stroke-width="1.300"/><rect x="0" y="5.300" width="2.600" height="2.600" fill="#000"/><rect x="13.400" y="5.300" width="2.600" height="2.600" fill="#000"/><path d="M4.500 10.700h7" stroke="#000" stroke-width="0.900"/><path d="M4 10.700l2-1.600v3.200zM12 10.700l-2-1.600v3.200z" fill="#000"/></svg>
<span class="t" style="left:137.8px;top:352.69px;font-size:11px;letter-spacing:-0.370px;">Cable 2</span>
<div style="left:97px;top:374px;width:13px;height:1px;background:repeating-linear-gradient(to right,#909090 0 1px,transparent 1px 2px);"></div>
<svg style="left:110px;top:374px" width="8" height="8" viewBox="0 0 8 8"><path d="M0.700 4.300l1.900 2.300L6.500 1.300" fill="none" stroke="#2f8a2f" stroke-width="1.500"/></svg>
<svg style="left:118px;top:366px" width="16" height="16" viewBox="0 0 16 16"><path d="M2 6.500Q3 3 5.500 4.800T8 7.300Q8.500 7.300 10.500 4.800T14 6.500" fill="none" stroke="#2a8a2a" stroke-width="1.300"/><rect x="0" y="5.300" width="2.600" height="2.600" fill="#000"/><rect x="13.400" y="5.300" width="2.600" height="2.600" fill="#000"/><path d="M4.500 10.700h7" stroke="#000" stroke-width="0.900"/><path d="M4 10.700l2-1.600v3.200zM12 10.700l-2-1.600v3.200z" fill="#000"/></svg>
<span class="t" style="left:137.8px;top:368.69px;font-size:11px;letter-spacing:-0.370px;">Cable 3</span>
<div style="left:97px;top:390px;width:13px;height:1px;background:repeating-linear-gradient(to right,#909090 0 1px,transparent 1px 2px);"></div>
<svg style="left:110px;top:390px" width="8" height="8" viewBox="0 0 8 8"><path d="M0.700 4.300l1.900 2.300L6.500 1.300" fill="none" stroke="#2f8a2f" stroke-width="1.500"/></svg>
<svg style="left:118px;top:382px" width="16" height="16" viewBox="0 0 16 16"><path d="M2 6.500Q3 3 5.500 4.800T8 7.300Q8.500 7.300 10.500 4.800T14 6.500" fill="none" stroke="#2a8a2a" stroke-width="1.300"/><rect x="0" y="5.300" width="2.600" height="2.600" fill="#000"/><rect x="13.400" y="5.300" width="2.600" height="2.600" fill="#000"/><path d="M4.500 10.700h7" stroke="#000" stroke-width="0.900"/><path d="M4 10.700l2-1.600v3.200zM12 10.700l-2-1.600v3.200z" fill="#000"/></svg>
<span class="t" style="left:137.8px;top:384.69px;font-size:11px;letter-spacing:-0.370px;">Cable 4</span>
<div style="left:70px;top:406px;width:13px;height:1px;background:repeating-linear-gradient(to right,#909090 0 1px,transparent 1px 2px);"></div>
<svg style="left:83px;top:406px" width="8" height="8" viewBox="0 0 8 8"><path d="M0.700 4.300l1.900 2.300L6.500 1.300" fill="none" stroke="#2f8a2f" stroke-width="1.500"/></svg>
<svg style="left:91px;top:398px" width="16" height="16" viewBox="0 0 16 16"><g stroke="#0c1a5c" stroke-width="0.9" stroke-linejoin="round"><path d="M0.800 3.200l3.700-2 4.300 1.600v2.500l-3.600 4.800-4.400-1.700z" fill="#fff"/><path d="M0.800 3.200l3.700-2 4.300 1.600-3.600 2z" fill="#fff"/><path d="M5.200 4.800v5.300" fill="none"/><path d="M5.600 5.200l4-2.200 4.900 2v6.400l-4 2.200-4.900-2z" fill="#fff"/><path d="M5.600 5.200l4-2.200 4.900 2-4 2.200z" fill="#fff"/><path d="M10.500 7.200l4-2.200v6.400l-4 2.200z" fill="#fff"/><path d="M3 2l4 1.600M3 6.100v3.300M0.800 6l4.400 1.600M8 4l4.700 2M8 6.400v6M5.600 8.400l4.900 2M12.500 6.100v6.300M10.500 10.400l4-2.200" fill="none" stroke-width="0.700"/></g></svg>
<span class="t" style="left:111.2px;top:400.69px;font-size:11px;transform:scaleX(0.9180);transform-origin:0 0;">Mesh</span>
<div style="left:74px;top:422px;width:9px;height:1px;background:repeating-linear-gradient(to right,#909090 0 1px,transparent 1px 2px);"></div>
<svg style="left:64px;top:418px" width="9" height="9" viewBox="0 0 9 9"><rect x="0.500" y="0.500" width="8" height="8" fill="#fff" stroke="#848484"/><path d="M2 4.500h5" stroke="#000"/></svg>
<svg style="left:83px;top:422px" width="8" height="8" viewBox="0 0 8 8"><path d="M0.700 4.300l1.900 2.300L6.500 1.300" fill="none" stroke="#2f8a2f" stroke-width="1.500"/></svg>
<svg style="left:91px;top:414px" width="16" height="16" viewBox="0 0 16 16"><rect x="1.200" y="0.700" width="14.600" height="14" rx="2.600" fill="url(#hg)" stroke="#1c6c78" stroke-width="0.800"/><path d="M3 9.200C3.800 5.500 5 4.200 6.200 4.200C7.800 4.200 8.500 9.400 10.500 9.400C12 9.400 13 6.500 13.800 4.800" fill="none" stroke="#fff" stroke-width="1.300"/><path d="M3.500 11.300h10" stroke="#fff" stroke-width="1.100"/><path d="M3.500 12.900h10" stroke="#a8e0e4" stroke-width="0.800"/></svg>
<span class="t" style="left:112.0px;top:416.69px;font-size:11px;letter-spacing:0.406px;font-weight:bold;">Hydrodynamic Diffraction (B4)</span>
<div style="left:97px;top:438px;width:13px;height:1px;background:repeating-linear-gradient(to right,#909090 0 1px,transparent 1px 2px);"></div>
<svg style="left:110px;top:438px" width="8" height="8" viewBox="0 0 8 8"><path d="M0.700 4.300l1.900 2.300L6.500 1.300" fill="none" stroke="#2f8a2f" stroke-width="1.500"/></svg>
<svg style="left:118px;top:430px" width="16" height="16" viewBox="0 0 16 16"><rect x="1.500" y="2.500" width="12.500" height="10.500" fill="#f6f6f6" stroke="#b8b8b8" stroke-width="0.700"/><path d="M1.500 13.300C3 10 4 3.800 6 3.500h3.500C11.500 3.800 12.500 10 14 13.300" fill="none" stroke="#2c5a48" stroke-width="1"/><path d="M1 0.800h13.500" stroke="#202068" stroke-width="0.700"/><path d="M3.200 0.800l1 1.700H2.200zM7.700 0.800l1 1.700H6.700zM12.200 0.800l1 1.700h-2z" fill="#202068"/><path d="M2.200 13.300l1.200 2H1zM7.700 13.300l1.200 2H6.500zM13.200 13.300l1.200 2H12z" fill="#b02020"/><path d="M1 15.300h13.500" stroke="#b02020" stroke-width="0.500"/></svg>
<span class="t" style="left:137.8px;top:432.69px;font-size:11px;letter-spacing:-0.217px;">Analysis Settings</span>
<div style="left:97px;top:454px;width:13px;height:1px;background:repeating-linear-gradient(to right,#909090 0 1px,transparent 1px 2px);"></div>
<svg style="left:110px;top:454px" width="8" height="8" viewBox="0 0 8 8"><path d="M0.700 4.300l1.900 2.300L6.500 1.300" fill="none" stroke="#2f8a2f" stroke-width="1.500"/></svg>
<svg style="left:118px;top:446px" width="16" height="16" viewBox="0 0 16 16"><path d="M1.500 3.500l3.200-2.300 4.300 1.500v5l-3.200 2.300-4.300-1.500z" fill="#a4bcea" stroke="#1a2a6a" stroke-width="0.900"/><path d="M1.500 3.500l4.300 1.500 3.200-2.300M5.800 5v5" fill="none" stroke="#1a2a6a" stroke-width="0.700"/><path d="M5.800 8.300l4-2.500 5.200 1.700v5.700l-4 2.500-5.200-1.700z" fill="#30d440" stroke="#083808" stroke-width="1"/><path d="M5.800 8.300l5.200 1.700 4-2.500M11 10v5.700" fill="none" stroke="#083808" stroke-width="0.900"/><path d="M5.800 8.300l5.200 1.700v5.700l-5.200-1.700z" fill="#20b830"/><path d="M0 13.500h4M2 11.500v4" stroke="#c02020" stroke-width="1"/></svg>
<span class="t" style="left:137.8px;top:448.69px;font-size:11px;letter-spacing:-0.141px;">Structure Selection</span>
<div style="left:97px;top:470px;width:13px;height:1px;background:repeating-linear-gradient(to right,#909090 0 1px,transparent 1px 2px);"></div>
<svg style="left:110px;top:470px" width="8" height="8" viewBox="0 0 8 8"><path d="M0.700 4.300l1.900 2.300L6.500 1.300" fill="none" stroke="#2f8a2f" stroke-width="1.500"/></svg>
<svg style="left:118px;top:462px" width="16" height="16" viewBox="0 0 16 16"><circle cx="6" cy="5.500" r="4.800" fill="#f4f4f4" stroke="#c8c8c8" stroke-width="0.700"/><path d="M0.800 6C1.500 2.500 3.500 1.800 5 4C6.500 6.500 7.500 9.300 9.500 8.500C10.500 8 11.300 6.300 11.800 5" fill="none" stroke="#000" stroke-width="1.500"/><path d="M15.200 9.300l-3.800 3.800M11.200 13.300v-2.800M11.200 13.300h2.800" stroke="#000" stroke-width="1.100" fill="none"/></svg>
<span class="t" style="left:137.8px;top:464.69px;font-size:11px;letter-spacing:-0.141px;">Wave Directions</span>
<div style="left:97px;top:486px;width:13px;height:1px;background:repeating-linear-gradient(to right,#909090 0 1px,transparent 1px 2px);"></div>
<svg style="left:110px;top:486px" width="8" height="8" viewBox="0 0 8 8"><path d="M0.700 4.300l1.900 2.300L6.500 1.300" fill="none" stroke="#2f8a2f" stroke-width="1.500"/></svg>
<svg style="left:118px;top:478px" width="16" height="16" viewBox="0 0 16 16"><circle cx="6" cy="5.500" r="4.800" fill="#f4f4f4" stroke="#c8c8c8" stroke-width="0.700"/><path d="M0.800 6C1.500 2.500 3.500 1.800 5 4C6.500 6.500 7.500 9.300 9.500 8.500C10.500 8 11.300 6.300 11.800 5" fill="none" stroke="#000" stroke-width="1.500"/><text x="10.300" y="15.800" font-size="7" font-weight="bold" font-family="Liberation Sans,sans-serif" fill="#000">F</text></svg>
<span class="t" style="left:137.8px;top:480.69px;font-size:11px;letter-spacing:-0.181px;">Wave Frequencies</span>
<div style="left:101px;top:502px;width:9px;height:1px;background:repeating-linear-gradient(to right,#909090 0 1px,transparent 1px 2px);"></div>
<svg style="left:91px;top:498px" width="9" height="9" viewBox="0 0 9 9"><rect x="0.500" y="0.500" width="8" height="8" fill="#fff" stroke="#848484"/><path d="M2 4.500h5" stroke="#000"/><path d="M4.500 2v5" stroke="#000"/></svg>
<svg style="left:110px;top:502px" width="8" height="8" viewBox="0 0 8 8"><path d="M0.700 4.300l1.900 2.300L6.500 1.300" fill="none" stroke="#2f8a2f" stroke-width="1.500"/></svg>
<svg style="left:118px;top:494px" width="16" height="16" viewBox="0 0 16 16"><path d="M0.800 3q0-1.800 1.800-1.800h3.200q1 0 1.600 1l0.500 0.800h5.500q1.500 0 1.500 1.500v8.800q0 1.200-1.200 1.200H2q-1.200 0-1.200-1.200z" fill="#a8d2f6" stroke="#223a54" stroke-width="1.100"/><path d="M2 4.600h11.500" stroke="#d8ecfc" stroke-width="0.900"/></svg>
<span class="t" style="left:138.60000000000002px;top:496.69px;font-size:11px;letter-spacing:0.280px;font-weight:bold;">Solution (B5)</span>
<div style="left:74px;top:518px;width:9px;height:1px;background:repeating-linear-gradient(to right,#909090 0 1px,transparent 1px 2px);"></div>
<svg style="left:64px;top:514px" width="9" height="9" viewBox="0 0 9 9"><rect x="0.500" y="0.500" width="8" height="8" fill="#fff" stroke="#848484"/><path d="M2 4.500h5" stroke="#000"/></svg>
<svg style="left:83px;top:518px" width="8" height="8" viewBox="0 0 8 8"><path d="M0.700 4.300l1.900 2.300L6.500 1.300" fill="none" stroke="#2f8a2f" stroke-width="1.500"/></svg>
<svg style="left:91px;top:510px" width="16" height="16" viewBox="0 0 16 16"><rect x="1.200" y="0.700" width="14.600" height="14" rx="2.600" fill="url(#hg)" stroke="#1c6c78" stroke-width="0.800"/><path d="M3 9.200C3.800 5.500 5 4.200 6.200 4.200C7.800 4.200 8.500 9.400 10.500 9.400C12 9.400 13 6.500 13.800 4.800" fill="none" stroke="#fff" stroke-width="1.300"/><path d="M3.500 11.300h10" stroke="#fff" stroke-width="1.100"/><path d="M3.500 12.900h10" stroke="#a8e0e4" stroke-width="0.800"/><circle cx="13" cy="12.800" r="2.900" fill="#6a86e0" stroke="#dfe6ff" stroke-width="0.700"/><path d="M13 11.200v1.800h1.400" stroke="#fff" stroke-width="0.800" fill="none"/></svg>
<span class="t" style="left:112.0px;top:512.69px;font-size:11px;letter-spacing:0.367px;font-weight:bold;">Stability Analysis (C4)</span>
<div style="left:97px;top:534px;width:13px;height:1px;background:repeating-linear-gradient(to right,#909090 0 1px,transparent 1px 2px);"></div>
<svg style="left:110px;top:534px" width="8" height="8" viewBox="0 0 8 8"><path d="M0.700 4.300l1.900 2.300L6.500 1.300" fill="none" stroke="#2f8a2f" stroke-width="1.500"/></svg>
<svg style="left:118px;top:526px" width="16" height="16" viewBox="0 0 16 16"><rect x="1.500" y="2.500" width="12.500" height="10.500" fill="#f6f6f6" stroke="#b8b8b8" stroke-width="0.700"/><path d="M1.500 13.300C3 10 4 3.800 6 3.500h3.500C11.500 3.800 12.500 10 14 13.300" fill="none" stroke="#2c5a48" stroke-width="1"/><path d="M1 0.800h13.500" stroke="#202068" stroke-width="0.700"/><path d="M3.200 0.800l1 1.700H2.200zM7.700 0.800l1 1.700H6.700zM12.200 0.800l1 1.700h-2z" fill="#202068"/><path d="M2.200 13.300l1.200 2H1zM7.700 13.300l1.200 2H6.500zM13.200 13.300l1.200 2H12z" fill="#b02020"/><path d="M1 15.300h13.500" stroke="#b02020" stroke-width="0.500"/></svg>
<span class="t" style="left:137.8px;top:528.69px;font-size:11px;letter-spacing:-0.217px;">Analysis Settings</span>
<div style="left:101px;top:550px;width:9px;height:1px;background:repeating-linear-gradient(to right,#909090 0 1px,transparent 1px 2px);"></div>
<svg style="left:91px;top:546px" width="9" height="9" viewBox="0 0 9 9"><rect x="0.500" y="0.500" width="8" height="8" fill="#fff" stroke="#848484"/><path d="M2 4.500h5" stroke="#000"/></svg>
<svg style="left:110px;top:550px" width="8" height="8" viewBox="0 0 8 8"><path d="M0.700 4.300l1.900 2.300L6.500 1.300" fill="none" stroke="#2f8a2f" stroke-width="1.500"/></svg>
<svg style="left:118px;top:542px" width="16" height="16" viewBox="0 0 16 16"><path d="M0.800 3q0-1.800 1.800-1.800h3.200q1 0 1.600 1l0.500 0.800h5.500q1.500 0 1.500 1.500v8.800q0 1.200-1.200 1.200H2q-1.200 0-1.200-1.200z" fill="#a8d2f6" stroke="#223a54" stroke-width="1.100"/><path d="M2 4.600h11.500" stroke="#d8ecfc" stroke-width="0.900"/></svg>
<span class="t" style="left:138.60000000000002px;top:544.69px;font-size:11px;letter-spacing:0.280px;font-weight:bold;">Solution (C5)</span>
<div style="left:124px;top:566px;width:13px;height:1px;background:repeating-linear-gradient(to right,#909090 0 1px,transparent 1px 2px);"></div>
<svg style="left:137px;top:566px" width="8" height="8" viewBox="0 0 8 8"><path d="M0.700 4.300l1.900 2.300L6.500 1.300" fill="none" stroke="#2f8a2f" stroke-width="1.500"/></svg>
<svg style="left:145px;top:558px" width="16" height="16" viewBox="0 0 16 16"><g transform="translate(0 2)"><rect x="0" y="1" width="16.500" height="9" fill="#30bce4"/><path d="M3.500 1v3.500q4.500 3.500 9.500 0V1z" fill="#f6fcff"/><rect x="0" y="7.300" width="16.500" height="3.200" fill="#1838b0"/><rect x="0" y="6.500" width="16.500" height="0.800" fill="#2468c8"/></g></svg>
<span class="t" style="left:165.3px;top:560.69px;font-size:11px;letter-spacing:-0.365px;">Animation</span>
<div style="left:74px;top:582px;width:9px;height:1px;background:repeating-linear-gradient(to right,#909090 0 1px,transparent 1px 2px);"></div>
<svg style="left:64px;top:578px" width="9" height="9" viewBox="0 0 9 9"><rect x="0.500" y="0.500" width="8" height="8" fill="#fff" stroke="#848484"/><path d="M2 4.500h5" stroke="#000"/></svg>
<svg style="left:83px;top:582px" width="8" height="8" viewBox="0 0 8 8"><path d="M0.700 4.300l1.900 2.300L6.500 1.300" fill="none" stroke="#2f8a2f" stroke-width="1.500"/></svg>
<svg style="left:91px;top:574px" width="16" height="16" viewBox="0 0 16 16"><rect x="1.200" y="0.700" width="14.600" height="14" rx="2.600" fill="url(#hg)" stroke="#1c6c78" stroke-width="0.800"/><path d="M3 9.200C3.800 5.500 5 4.200 6.200 4.200C7.800 4.200 8.500 9.400 10.500 9.400C12 9.400 13 6.500 13.800 4.800" fill="none" stroke="#fff" stroke-width="1.300"/><path d="M3.500 11.300h10" stroke="#fff" stroke-width="1.100"/><path d="M3.500 12.900h10" stroke="#a8e0e4" stroke-width="0.800"/><circle cx="13" cy="12.800" r="2.900" fill="#6a86e0" stroke="#dfe6ff" stroke-width="0.700"/><path d="M13 11.200v1.800h1.400" stroke="#fff" stroke-width="0.800" fill="none"/></svg>
<span class="t" style="left:112.0px;top:576.69px;font-size:11px;letter-spacing:0.453px;font-weight:bold;">Hydrodynamic Response (D4)</span>
<div style="left:97px;top:598px;width:13px;height:1px;background:repeating-linear-gradient(to right,#909090 0 1px,transparent 1px 2px);"></div>
<svg style="left:110px;top:598px" width="8" height="8" viewBox="0 0 8 8"><path d="M0.700 4.300l1.900 2.300L6.500 1.300" fill="none" stroke="#2f8a2f" stroke-width="1.500"/></svg>
<svg style="left:118px;top:590px" width="16" height="16" viewBox="0 0 16 16"><rect x="1.500" y="2.500" width="12.500" height="10.500" fill="#f6f6f6" stroke="#b8b8b8" stroke-width="0.700"/><path d="M1.500 13.300C3 10 4 3.800 6 3.500h3.500C11.500 3.800 12.500 10 14 13.300" fill="none" stroke="#2c5a48" stroke-width="1"/><path d="M1 0.800h13.500" stroke="#202068" stroke-width="0.700"/><path d="M3.200 0.800l1 1.700H2.200zM7.700 0.800l1 1.700H6.700zM12.200 0.800l1 1.700h-2z" fill="#202068"/><path d="M2.200 13.300l1.200 2H1zM7.700 13.300l1.200 2H6.500zM13.200 13.300l1.200 2H12z" fill="#b02020"/><path d="M1 15.300h13.500" stroke="#b02020" stroke-width="0.500"/></svg>
<span class="t" style="left:137.8px;top:592.69px;font-size:11px;letter-spacing:-0.217px;">Analysis Settings</span>
<div style="left:97px;top:614px;width:13px;height:1px;background:repeating-linear-gradient(to right,#909090 0 1px,transparent 1px 2px);"></div>
<svg style="left:110px;top:614px" width="8" height="8" viewBox="0 0 8 8"><path d="M0.700 4.300l1.900 2.300L6.500 1.300" fill="none" stroke="#2f8a2f" stroke-width="1.500"/></svg>
<svg style="left:118px;top:606px" width="16" height="16" viewBox="0 0 16 16"><path d="M1 9C2 5.500 3.200 4.300 4.500 4.300C7 4.300 8 11.200 10.500 11.200C12.500 11.200 13.800 9 15 6.800" fill="none" stroke="#181818" stroke-width="1"/></svg>
<span class="t" style="left:137.8px;top:608.69px;font-size:11px;letter-spacing:-0.128px;">Regular Wave 1</span>
<div style="left:101px;top:630px;width:9px;height:1px;background:repeating-linear-gradient(to right,#909090 0 1px,transparent 1px 2px);"></div>
<svg style="left:91px;top:626px" width="9" height="9" viewBox="0 0 9 9"><rect x="0.500" y="0.500" width="8" height="8" fill="#fff" stroke="#848484"/><path d="M2 4.500h5" stroke="#000"/><path d="M4.500 2v5" stroke="#000"/></svg>
<div style="left:136px;top:622px;width:78px;height:16px;background:#f5f5f5;"></div>
<svg style="left:110px;top:627px" width="8" height="12" viewBox="0 0 8 12"><path d="M4 0.500h3.500l-2 3h2.200l-2.700 3h2l-5.500 5 2.200-4.200h-1.800l2.300-3.300h-1.900z" fill="#f4e430" stroke="#b8a420" stroke-width="0.500"/></svg>
<svg style="left:118px;top:622px" width="16" height="16" viewBox="0 0 16 16"><path d="M0.800 3q0-1.800 1.800-1.800h3.200q1 0 1.600 1l0.500 0.800h5.500q1.500 0 1.500 1.500v8.800q0 1.200-1.200 1.200H2q-1.200 0-1.200-1.200z" fill="#a8d2f6" stroke="#223a54" stroke-width="1.100"/><path d="M2 4.600h11.500" stroke="#d8ecfc" stroke-width="0.900"/></svg>
<span class="t" style="left:138.60000000000002px;top:624.69px;font-size:11px;letter-spacing:0.405px;font-weight:bold;">Solution (D5)</span>
<div style="left:0px;top:637px;width:340px;height:6px;background:#f4f4f4;"></div>
<div style="left:0px;top:643px;width:339px;height:20px;background:linear-gradient(#dce6f2,#c6d3e2);"></div>
<span class="t" style="left:4.5px;top:647.84px;font-size:12px;transform:scaleX(0.9267);transform-origin:0 0;">Details</span>
<svg style="left:327px;top:648px" width="7" height="11" viewBox="0 0 7 11"><path d="M1.500 0.500h4v5.500h-4z" fill="#fff" stroke="#000"/><path d="M4.500 1v5" stroke="#000"/><path d="M0 6.500h7M3.500 7v4" stroke="#000" fill="none"/></svg>
<div style="left:13px;top:663px;width:327px;height:39px;background:#fff;border:1px solid #808080;box-sizing:border-box;"></div>
<div style="left:13px;top:682px;width:327px;height:1px;background:#808080;"></div>
<div style="left:194px;top:683px;width:1px;height:19px;background:#808080;"></div>
<svg style="left:2px;top:668px" width="9" height="9" viewBox="0 0 9 9"><rect x="0.500" y="0.500" width="8" height="8" fill="#fff" stroke="#848484"/><path d="M2 4.500h5" stroke="#000"/></svg>
<span class="t" style="left:17.2px;top:667.09px;font-size:11px;letter-spacing:0.080px;font-weight:bold;">Details of Solution</span>
<span class="t" style="left:17.2px;top:685.99px;font-size:11px;transform:scaleX(0.8963);transform-origin:0 0;">Name</span>
<span class="t" style="left:198.4px;top:685.99px;font-size:11px;transform:scaleX(0.9204);transform-origin:0 0;">Solution</span>
<div style="left:339px;top:72px;width:5px;height:635px;background:#f0f0f0;"></div>
<div style="left:344px;top:73px;width:1021px;height:306px;background:linear-gradient(#6a8adf,#ffffff);"></div>
<div style="left:344px;top:379px;width:1021px;height:18px;background:#fff;"></div>
<svg style="left:344px;top:73px" width="1021" height="306" viewBox="344 73 1021 306">
<rect x="344" y="174.500" width="1021" height="205" fill="rgb(100,110,170)" opacity="0.14"/><rect x="344" y="173.500" width="1021" height="1" fill="#fff" opacity="0.12"/>
<path d="M551.500 183.500L344 370.500" stroke="#141450" stroke-width="1" fill="none"/>
<path d="M1164.500 183.500L1365 373" stroke="#141450" stroke-width="1" fill="none"/>
<g stroke="#101010" stroke-width="1">
<rect x="551.500" y="169.500" width="102.200" height="14" fill="#c4bc85"/>
<rect x="653.700" y="169.500" width="102.100" height="14" fill="#c3a68e"/>
<rect x="755.800" y="169.500" width="102.200" height="14" fill="#97a3b9"/>
<rect x="858" y="169.500" width="102.200" height="14" fill="#adaeb4"/>
<rect x="960.200" y="169.500" width="102.100" height="14" fill="#9cb395"/>
<rect x="1062.300" y="169.500" width="102.200" height="14" fill="#a4bcbc"/>
<path d="M551.500 174.500H1164.500" fill="none"/><rect x="552" y="170" width="612" height="4" fill="#fff" opacity="0.100" stroke="none"/>
</g>
<!-- scale ruler -->
<rect x="701.500" y="362.500" width="306" height="6" fill="#f4f4f8" stroke="#000"/>
<rect x="701" y="362" width="77" height="7" fill="#000"/>
<rect x="854" y="362" width="78" height="7" fill="#000"/>
<!-- triad -->
<path d="M1289 329V288" stroke="#1414a0" stroke-width="4"/><path d="M1289 276.500l5.200 12.500h-10.400z" fill="#1414a0"/>
<path d="M1290 328.500h40" stroke="#b01818" stroke-width="4"/><path d="M1341 328.500l-12 4.700v-9.400z" fill="#b01818"/><path d="M1291 325l3-3.500" stroke="#1f7a1f" stroke-width="1"/>
<circle cx="1289" cy="329" r="4.500" fill="#1f7a1f"/>
<circle cx="1264.500" cy="353.500" r="5.500" fill="#18b0b8"/><circle cx="1263.500" cy="352.500" r="2.500" fill="#40d0d8"/>
</svg>
<span class="t" style="left:690.5px;top:349.69px;font-size:11px;letter-spacing:-0.141px;">0.00</span>
<span class="t" style="left:839px;top:349.69px;font-size:11px;letter-spacing:0.117px;">45.00</span>
<span class="t" style="left:994px;top:349.69px;font-size:11px;letter-spacing:-0.010px;">90.00 (m)</span>
<span class="t" style="left:763px;top:369.69px;font-size:11px;letter-spacing:-0.008px;">22.50</span>
<span class="t" style="left:918px;top:369.69px;font-size:11px;letter-spacing:-0.008px;">67.50</span>
<span class="t" style="left:1288px;top:258.19px;font-size:11px;letter-spacing:1.266px;color:#2020c0;">Z</span>
<span class="t" style="left:1349px;top:319.19px;font-size:11px;letter-spacing:0.656px;color:#e03030;">X</span>
<span class="t" style="left:1246px;top:90.68px;font-size:37px;letter-spacing:0.234px;color:#fff;font-weight:bold;">Ansys</span>
<span class="t" style="left:1288px;top:130.61px;font-size:17px;letter-spacing:0.786px;color:#fff;font-weight:bold;">2022 R2</span>
<div style="left:344px;top:397px;width:1021px;height:17px;background:#f0f0f0;"></div>
<svg style="left:344px;top:397px" width="1021" height="17" viewBox="344 397 1021 17" fill="none" stroke="#000" stroke-width="1"><path d="M344.4 397l7.500 16.500H412.5l7.500-16.500z" fill="#fff" stroke="none"/><path d="M420.0 397.5H1365M344 413.5H1365"/><path d="M344.4 397l7.500 16.500M412.5 413.5l7.500-16M344.500 397v16.500"/><path d="M416.5 405.5l3.700 8"/><path d="M478.5 397.5l7.500 16M477.0 413.5l3.800-8"/><path d="M522.4 397.5l7.500 16M520.9 413.5l3.800-8"/><path d="M612.5 413.5l7.500-16"/></svg>
<span class="t" style="left:354.7px;top:399.84px;font-size:12px;letter-spacing:-0.004px;font-weight:bold;">Geometry</span>
<span class="t" style="left:423.5px;top:399.84px;font-size:12px;letter-spacing:-0.300px;color:#8c8c8c;">Properties</span>
<span class="t" style="left:488.7px;top:399.84px;font-size:12px;transform:scaleX(0.9233);transform-origin:0 0;color:#8c8c8c;">Graph</span>
<span class="t" style="left:532px;top:399.84px;font-size:12px;letter-spacing:-0.272px;">Report Preview</span>
<div style="left:344px;top:414px;width:1021px;height:4px;background:#f8f8f8;"></div>
<div style="left:344px;top:418px;width:1021px;height:20px;background:linear-gradient(to right,#98b3d3,#a9c3e1);"></div>
<span class="t" style="left:348.5px;top:422.84px;font-size:12px;letter-spacing:0.194px;">Output</span>
<svg style="left:1336.5px;top:423px" width="7" height="11" viewBox="0 0 7 11"><path d="M1.500 0.500h4v5.500h-4z" fill="#fff" stroke="#000"/><path d="M4.500 1v5" stroke="#000"/><path d="M0 6.500h7M3.500 7v4" stroke="#000" fill="none"/></svg>
<svg style="left:1353.5px;top:424px" width="8" height="8" viewBox="0 0 8 8"><path d="M0.700 0.700l6 6M6.700 0.700L0.700 6.700" stroke="#000" stroke-width="1.600"/></svg>
<div style="left:344px;top:438px;width:1005px;height:232px;background:#fff;"></div>
<div style="left:344px;top:438px;width:1005px;height:16px;background:#f3f3f3;"></div>
<div style="left:344px;top:454px;width:53px;height:216px;background:#f3f3f3;"></div>
<div style="left:344px;top:454px;width:1005px;height:1px;background:#6a6a6a;"></div>
<span class="t" style="left:402px;top:440.34px;font-size:12px;transform:scaleX(0.8994);transform-origin:0 0;">Text</span>
<span class="t" style="left:1257.7px;top:440.34px;font-size:12px;letter-spacing:-0.087px;">Association</span>
<div style="left:344px;top:455px;width:1005px;height:215px;overflow:hidden;">
<div style="left:0px;top:16px;width:1005px;height:1px;background:#c8c8c8;"></div>
<div style="left:0px;top:16px;width:53px;height:1px;background:#808080;"></div>
<span class="t" style="left:3.6px;top:2.84px;font-size:12px;transform:scaleX(0.9073);transform-origin:0 0;">Error</span>
<span class="t" style="left:60.8px;top:2.84px;font-size:12px;letter-spacing:-0.307px;">Solve aborted!</span>
<div style="left:909px;top:0px;width:96px;height:16px;overflow:hidden;">
<span class="t" style="left:4.7px;top:2.84px;font-size:12px;letter-spacing:0.141px;">Project&gt;Model&gt;Hydrodynamic Response (D4)&gt;Solution (D5)</span>
</div>
<div style="left:0px;top:33px;width:1005px;height:1px;background:#c8c8c8;"></div>
<div style="left:0px;top:33px;width:53px;height:1px;background:#808080;"></div>
<span class="t" style="left:3.6px;top:19.84px;font-size:12px;transform:scaleX(0.9073);transform-origin:0 0;">Error</span>
<span class="t" style="left:60.8px;top:19.84px;font-size:12px;letter-spacing:-0.156px;">The Aqwa Core Solver stopped unexpectedly.</span>
<div style="left:909px;top:17px;width:96px;height:16px;overflow:hidden;">
<span class="t" style="left:4.7px;top:2.84px;font-size:12px;letter-spacing:0.141px;">Project&gt;Model&gt;Hydrodynamic Response (D4)&gt;Solution (D5)</span>
</div>
<div style="left:0px;top:50px;width:1005px;height:1px;background:#c8c8c8;"></div>
<div style="left:0px;top:50px;width:53px;height:1px;background:#808080;"></div>
<span class="t" style="left:3.6px;top:36.84px;font-size:12px;transform:scaleX(0.9073);transform-origin:0 0;">Error</span>
<span class="t" style="left:60.8px;top:36.84px;font-size:12px;transform:scaleX(0.8740);transform-origin:0 0;">TERMINATED WITH ERRORS.</span>
<div style="left:909px;top:34px;width:96px;height:16px;overflow:hidden;">
<span class="t" style="left:4.7px;top:2.84px;font-size:12px;letter-spacing:0.141px;">Project&gt;Model&gt;Hydrodynamic Response (D4)&gt;Solution (D5)</span>
</div>
<div style="left:54px;top:51px;width:855px;height:16px;background:#1178cf;"></div>
<div style="left:0px;top:67px;width:1005px;height:1px;background:#c8c8c8;"></div>
<div style="left:0px;top:67px;width:53px;height:1px;background:#808080;"></div>
<span class="t" style="left:3.6px;top:53.84px;font-size:12px;transform:scaleX(0.9073);transform-origin:0 0;">Error</span>
<span class="t" style="left:60.8px;top:53.84px;font-size:12px;transform:scaleX(0.8989);transform-origin:0 0;color:#fff;">HYDRODYNAMICALLY INTERACTING STRUCTURES HAVE MOVED TOO FAR FROM ANALYSIS POSITION MOVEMENT EXCEEDS 75% STOPPED AT TIME = 0.00.</span>
<div style="left:909px;top:51px;width:96px;height:16px;overflow:hidden;">
<span class="t" style="left:4.7px;top:2.84px;font-size:12px;letter-spacing:0.141px;">Project&gt;Model&gt;Hydrodynamic Response (D4)&gt;Solution (D5)</span>
</div>
<div style="left:0px;top:84px;width:1005px;height:1px;background:#c8c8c8;"></div>
<div style="left:0px;top:84px;width:53px;height:1px;background:#808080;"></div>
<span class="t" style="left:3.6px;top:70.84px;font-size:12px;letter-spacing:-0.075px;">Warning</span>
<span class="t" style="left:60.8px;top:70.84px;font-size:12px;transform:scaleX(0.9106);transform-origin:0 0;">THE CONVOLUTION METHOD WHICH IS MORE ACCURATE FOR ANY NON-LINEAR RESPONSE IS NOT IMPLEMENTED AS THE OPTION NCNV IS DECLARED.</span>
<div style="left:909px;top:68px;width:96px;height:16px;overflow:hidden;">
<span class="t" style="left:4.7px;top:2.84px;font-size:12px;letter-spacing:0.141px;">Project&gt;Model&gt;Hydrodynamic Response (D4)&gt;Solution (D5)</span>
</div>
<div style="left:0px;top:101px;width:1005px;height:1px;background:#c8c8c8;"></div>
<div style="left:0px;top:101px;width:53px;height:1px;background:#808080;"></div>
<span class="t" style="left:3.6px;top:87.84px;font-size:12px;letter-spacing:-0.075px;">Warning</span>
<span class="t" style="left:60.8px;top:87.84px;font-size:12px;transform:scaleX(0.8851);transform-origin:0 0;">INTERVAL BETWEEN WAVE DIRECTION # 2 AND DIRECTION # 3 FOR STRUCTURE #6 SHOULD NOT BE GREATER THAN 90 DEGREES.</span>
<div style="left:909px;top:85px;width:96px;height:16px;overflow:hidden;">
<span class="t" style="left:4.7px;top:2.84px;font-size:12px;letter-spacing:0.141px;">Project&gt;Model&gt;Hydrodynamic Response (D4)&gt;Solution (D5)</span>
</div>
<div style="left:0px;top:118px;width:1005px;height:1px;background:#c8c8c8;"></div>
<div style="left:0px;top:118px;width:53px;height:1px;background:#808080;"></div>
<span class="t" style="left:3.6px;top:104.84px;font-size:12px;letter-spacing:-0.075px;">Warning</span>
<span class="t" style="left:60.8px;top:104.84px;font-size:12px;transform:scaleX(0.8851);transform-origin:0 0;">INTERVAL BETWEEN WAVE DIRECTION # 1 AND DIRECTION # 2 FOR STRUCTURE #6 SHOULD NOT BE GREATER THAN 90 DEGREES.</span>
<div style="left:909px;top:102px;width:96px;height:16px;overflow:hidden;">
<span class="t" style="left:4.7px;top:2.84px;font-size:12px;letter-spacing:0.141px;">Project&gt;Model&gt;Hydrodynamic Response (D4)&gt;Solution (D5)</span>
</div>
<div style="left:0px;top:135px;width:1005px;height:1px;background:#c8c8c8;"></div>
<div style="left:0px;top:135px;width:53px;height:1px;background:#808080;"></div>
<span class="t" style="left:3.6px;top:121.84px;font-size:12px;letter-spacing:-0.075px;">Warning</span>
<span class="t" style="left:60.8px;top:121.84px;font-size:12px;transform:scaleX(0.8851);transform-origin:0 0;">INTERVAL BETWEEN WAVE DIRECTION # 2 AND DIRECTION # 3 FOR STRUCTURE #5 SHOULD NOT BE GREATER THAN 90 DEGREES.</span>
<div style="left:909px;top:119px;width:96px;height:16px;overflow:hidden;">
<span class="t" style="left:4.7px;top:2.84px;font-size:12px;letter-spacing:0.141px;">Project&gt;Model&gt;Hydrodynamic Response (D4)&gt;Solution (D5)</span>
</div>
<div style="left:0px;top:152px;width:1005px;height:1px;background:#c8c8c8;"></div>
<div style="left:0px;top:152px;width:53px;height:1px;background:#808080;"></div>
<span class="t" style="left:3.6px;top:138.84px;font-size:12px;letter-spacing:-0.075px;">Warning</span>
<span class="t" style="left:60.8px;top:138.84px;font-size:12px;transform:scaleX(0.8851);transform-origin:0 0;">INTERVAL BETWEEN WAVE DIRECTION # 1 AND DIRECTION # 2 FOR STRUCTURE #5 SHOULD NOT BE GREATER THAN 90 DEGREES.</span>
<div style="left:909px;top:136px;width:96px;height:16px;overflow:hidden;">
<span class="t" style="left:4.7px;top:2.84px;font-size:12px;letter-spacing:0.141px;">Project&gt;Model&gt;Hydrodynamic Response (D4)&gt;Solution (D5)</span>
</div>
<div style="left:0px;top:169px;width:1005px;height:1px;background:#c8c8c8;"></div>
<div style="left:0px;top:169px;width:53px;height:1px;background:#808080;"></div>
<span class="t" style="left:3.6px;top:155.84px;font-size:12px;letter-spacing:-0.075px;">Warning</span>
<span class="t" style="left:60.8px;top:155.84px;font-size:12px;transform:scaleX(0.8851);transform-origin:0 0;">INTERVAL BETWEEN WAVE DIRECTION # 2 AND DIRECTION # 3 FOR STRUCTURE #4 SHOULD NOT BE GREATER THAN 90 DEGREES.</span>
<div style="left:909px;top:153px;width:96px;height:16px;overflow:hidden;">
<span class="t" style="left:4.7px;top:2.84px;font-size:12px;letter-spacing:0.141px;">Project&gt;Model&gt;Hydrodynamic Response (D4)&gt;Solution (D5)</span>
</div>
<div style="left:0px;top:186px;width:1005px;height:1px;background:#c8c8c8;"></div>
<div style="left:0px;top:186px;width:53px;height:1px;background:#808080;"></div>
<span class="t" style="left:3.6px;top:172.84px;font-size:12px;letter-spacing:-0.075px;">Warning</span>
<span class="t" style="left:60.8px;top:172.84px;font-size:12px;transform:scaleX(0.8851);transform-origin:0 0;">INTERVAL BETWEEN WAVE DIRECTION # 1 AND DIRECTION # 2 FOR STRUCTURE #4 SHOULD NOT BE GREATER THAN 90 DEGREES.</span>
<div style="left:909px;top:170px;width:96px;height:16px;overflow:hidden;">
<span class="t" style="left:4.7px;top:2.84px;font-size:12px;letter-spacing:0.141px;">Project&gt;Model&gt;Hydrodynamic Response (D4)&gt;Solution (D5)</span>
</div>
<div style="left:0px;top:203px;width:1005px;height:1px;background:#c8c8c8;"></div>
<div style="left:0px;top:203px;width:53px;height:1px;background:#808080;"></div>
<span class="t" style="left:3.6px;top:189.84px;font-size:12px;letter-spacing:-0.075px;">Warning</span>
<span class="t" style="left:60.8px;top:189.84px;font-size:12px;transform:scaleX(0.8851);transform-origin:0 0;">INTERVAL BETWEEN WAVE DIRECTION # 2 AND DIRECTION # 3 FOR STRUCTURE #3 SHOULD NOT BE GREATER THAN 90 DEGREES.</span>
<div style="left:909px;top:187px;width:96px;height:16px;overflow:hidden;">
<span class="t" style="left:4.7px;top:2.84px;font-size:12px;letter-spacing:0.141px;">Project&gt;Model&gt;Hydrodynamic Response (D4)&gt;Solution (D5)</span>
</div>
<div style="left:0px;top:220px;width:1005px;height:1px;background:#c8c8c8;"></div>
<div style="left:0px;top:220px;width:53px;height:1px;background:#808080;"></div>
<span class="t" style="left:3.6px;top:206.84px;font-size:12px;letter-spacing:-0.075px;">Warning</span>
<span class="t" style="left:60.8px;top:206.84px;font-size:12px;transform:scaleX(0.8851);transform-origin:0 0;">INTERVAL BETWEEN WAVE DIRECTION # 1 AND DIRECTION # 2 FOR STRUCTURE #3 SHOULD NOT BE GREATER THAN 90 DEGREES.</span>
<div style="left:909px;top:204px;width:96px;height:16px;overflow:hidden;">
<span class="t" style="left:4.7px;top:2.84px;font-size:12px;letter-spacing:0.141px;">Project&gt;Model&gt;Hydrodynamic Response (D4)&gt;Solution (D5)</span>
</div>
<div style="left:53px;top:0px;width:1px;height:215px;background:#6a6a6a;"></div>
<div style="left:909px;top:0px;width:1px;height:215px;background:#6a6a6a;"></div>
</div>
<div style="left:397px;top:438px;width:1px;height:17px;background:#6a6a6a;"></div>
<div style="left:1253px;top:438px;width:1px;height:17px;background:#6a6a6a;"></div>
<div style="left:1349px;top:438px;width:16px;height:232px;background:#f0f0f0;"></div>
<div style="left:1350px;top:455px;width:15px;height:55px;background:#cdcdcd;"></div>
<svg style="left:1353.5px;top:444.5px" width="8" height="6" viewBox="0 0 8 6"><path d="M0.700 5l3.300-3.300L7.300 5" fill="none" stroke="#404040" stroke-width="1.800"/></svg>
<svg style="left:1353.5px;top:659px" width="8" height="6" viewBox="0 0 8 6"><path d="M0.700 1l3.300 3.300L7.300 1" fill="none" stroke="#404040" stroke-width="1.800"/></svg>
<div style="left:344px;top:670px;width:1021px;height:17px;background:#f0f0f0;"></div>
<div style="left:361px;top:671px;width:674px;height:15px;background:#cdcdcd;"></div>
<svg style="left:349px;top:674.5px" width="6" height="8" viewBox="0 0 6 8"><path d="M4.800 0.700L1.500 4 4.800 7.300" fill="none" stroke="#404040" stroke-width="1.800"/></svg>
<svg style="left:1338px;top:674.5px" width="6" height="8" viewBox="0 0 6 8"><path d="M1.200 0.700L4.500 4 1.200 7.300" fill="none" stroke="#404040" stroke-width="1.800"/></svg>
<div style="left:344px;top:687px;width:1021px;height:17px;background:#f0f0f0;"></div>
<svg style="left:344px;top:687px" width="1021" height="17" viewBox="344 687 1021 17" fill="none" stroke="#000" stroke-width="1"><path d="M344.4 687l7.500 16.500H409.2l7.500-16.500z" fill="#fff" stroke="none"/><path d="M416.7 687.5H1365M344 703.5H1365"/><path d="M344.4 687l7.500 16.500M409.2 703.5l7.500-16M344.500 687v16.500"/><path d="M413.2 695.5l3.700 8"/><path d="M469 687.5l7.500 16M467.5 703.5l3.800-8"/><path d="M523.2 703.5l7.500-16"/></svg>
<span class="t" style="left:354.7px;top:689.84px;font-size:12px;transform:scaleX(0.9063);transform-origin:0 0;font-weight:bold;">Messages</span>
<span class="t" style="left:420.3px;top:689.84px;font-size:12px;letter-spacing:-0.360px;color:#8c8c8c;">TimeLine</span>
<span class="t" style="left:480px;top:689.84px;font-size:12px;letter-spacing:0.281px;color:#8c8c8c;">Monitor</span>
<div style="left:344px;top:704px;width:1021px;height:3px;background:#f0f0f0;"></div>
</body></html>
